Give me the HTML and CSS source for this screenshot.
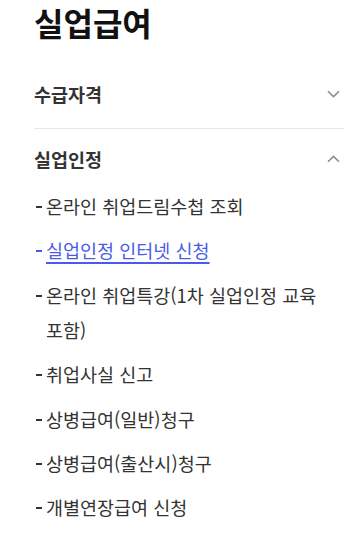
FILE: index.html
```html
<!DOCTYPE html>
<html lang="ko">
<head>
<meta charset="utf-8">
<link rel="stylesheet" href="styles.css">
</head>
<body>
<div class="page">
  <h1 class="title">실업급여</h1>
  <div class="acc">
    <div class="acc-head">
      <span class="acc-label">수급자격</span>
      <svg class="chev" width="13" height="8" viewBox="0 0 13 8"><path d="M1 1.2 L6.5 6.6 L12 1.2" fill="none" stroke="#8a8a8a" stroke-width="1.5"/></svg>
    </div>
  </div>
  <div class="acc open">
    <div class="acc-head">
      <span class="acc-label">실업인정</span>
      <svg class="chev" width="13" height="8" viewBox="0 0 13 8"><path d="M1 6.8 L6.5 1.4 L12 6.8" fill="none" stroke="#8a8a8a" stroke-width="1.5"/></svg>
    </div>
    <ul class="items">
      <li class="item">온라인 취업드림수첩 조회</li>
      <li class="item active"><a href="#">실업인정 인터넷 신청</a></li>
      <li class="item">온라인 취업특강(1차 실업인정 교육 포함)</li>
      <li class="item">취업사실 신고</li>
      <li class="item">상병급여(일반)청구</li>
      <li class="item">상병급여(출산시)청구</li>
      <li class="item">개별연장급여 신청</li>
    </ul>
  </div>
</div>
</body>
</html>
```
FILE: styles.css
```css
* { box-sizing: border-box; }
html, body { margin: 0; padding: 0; background: #fff; }
body {
  font-family: "Noto Sans CJK KR", "Noto Sans", sans-serif;
  color: #222;
  word-break: keep-all;
}
.page {
  padding: 0 16px 0 34px;
}
.title {
  margin: 0;
  height: 62px;
  font-size: 32px;
  line-height: 44px;
  font-weight: 700;
  color: #111;
}
.acc-head {
  display: flex;
  align-items: center;
  justify-content: space-between;
  height: 66px;
  padding-bottom: 3px;
}
.acc + .acc { border-top: 1px solid #e6e6e6; }
.acc.open .acc-head { height: 60px; padding-bottom: 0; }
.acc-label {
  font-size: 18.5px;
  font-weight: 700;
  color: #333;
}
.chev { margin-right: 4px; }
.items {
  list-style: none;
  margin: 0;
  padding: 0;
  display: flex;
  flex-direction: column;
  gap: 9.4px;
}
.item {
  display: flex;
  font-size: 18.5px;
  line-height: 35px;
  color: #333;
}
.item::before {
  content: "";
  flex: 0 0 6px;
  height: 2px;
  margin: 17px 4px 0 2px;
  background: #333;
}
.item.active::before { background: #4a5be8; }
.item a {
  color: #4a5be8;
  text-decoration: underline;
  text-decoration-thickness: 2px;
  text-underline-offset: 4px;
}
```
